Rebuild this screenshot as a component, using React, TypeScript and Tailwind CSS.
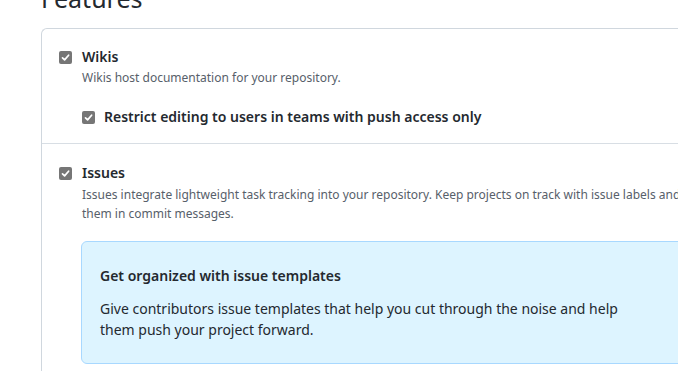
import React from "react"

function Check() {
  return (
    <span className="flex h-[13px] w-[13px] shrink-0 items-center justify-center rounded-[2px] bg-[#767676]">
      <svg width="9" height="9" viewBox="0 0 9 9" fill="none">
        <path d="M1.5 4.8 L3.6 6.9 L7.6 2.2" stroke="white" strokeWidth="1.7" strokeLinecap="round" strokeLinejoin="round" />
      </svg>
    </span>
  )
}

export default function App() {
  return (
    <div className="h-[371px] w-[678px] overflow-hidden bg-white font-['Noto_Sans',sans-serif] text-[#24292f]">
      <h2 className="-mt-[17px] ml-[41px] text-[25px] leading-[30px] font-normal">Features</h2>

      <div className="mt-[15px] ml-[41px] w-[900px] rounded-l-md border border-r-0 border-[#d0d7de]">
        <div className="border-b border-[#d8dee4] pt-[18px] pb-[16px] pl-[17px]">
          <div className="flex gap-[10px]">
            <div className="mt-[4px]">
              <Check />
            </div>
            <div>
              <div className="text-[14px] leading-[20px] font-semibold">Wikis</div>
              <p className="mt-[2px] text-[12px] leading-[18px] text-[#57606a]">
                Wikis host documentation for your repository.
              </p>
              <div className="mt-[20px] flex items-center gap-[9px]">
                <Check />
                <span className="text-[14px] leading-[20px] font-semibold">
                  Restrict editing to users in teams with push access only
                </span>
              </div>
            </div>
          </div>
        </div>

        <div className="pt-[19px] pb-[24px] pl-[17px]">
          <div className="flex gap-[10px]">
            <div className="mt-[4px]">
              <Check />
            </div>
            <div>
              <div className="text-[14px] leading-[20px] font-semibold">Issues</div>
              <p className="mt-[2px] w-[755px] text-[12px] leading-[19px] text-[#57606a]">
                Issues integrate lightweight task tracking into your repository. Keep projects on track with issue labels and milestones, and reference them in commit messages.
              </p>
              <div className="-ml-px mt-[18px] w-[640px] rounded-md border border-[#a8d8ff] bg-[#ddf4ff] pt-[24px] pb-[23px] pl-[18px]">
                <h3 className="text-[14px] leading-[20px] font-semibold">Get organized with issue templates</h3>
                <p className="mt-[12px] w-[550px] text-[14px] leading-[21px]">
                  Give contributors issue templates that help you cut through the noise and help them push your project forward.
                </p>
              </div>
            </div>
          </div>
        </div>
      </div>
    </div>
  )
}
